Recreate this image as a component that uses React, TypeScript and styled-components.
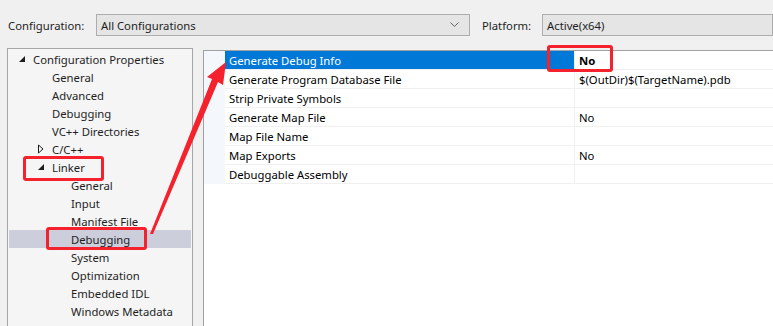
import styled, { createGlobalStyle } from "styled-components";

const Global = createGlobalStyle`
  body {
    margin: 0;
    background: #f0f0f0;
    font-family: "Segoe UI", "Noto Sans", "Liberation Sans", sans-serif;
    font-size: 11.3px;
    color: #1e1e1e;
  }
`;

const Page = styled.div`
  position: relative;
  width: 773px;
  height: 326px;
  overflow: hidden;
  background: #f0f0f0;
`;

const Toolbar = styled.div`
  display: flex;
  align-items: center;
  padding: 14px 0 0 8px;
  height: 22px;
`;

const Label = styled.span<{ w: number }>`
  width: ${({ w }) => w}px;
  flex-shrink: 0;
  color: #1e1e1e;
`;

const Combo = styled.div<{ w: number }>`
  display: flex;
  align-items: center;
  flex-shrink: 0;
  box-sizing: border-box;
  width: ${({ w }) => w}px;
  height: 22px;
  padding: 0 10px 0 4px;
  background: #e5e5e5;
  border: 1px solid #adadad;
  margin-right: 12px;
`;

const ComboText = styled.span`
  flex: 1;
`;

const Body = styled.div`
  display: flex;
  align-items: flex-start;
  gap: 10px;
  margin-top: 12px;
  padding-left: 7px;
`;

const Tree = styled.div`
  box-sizing: border-box;
  width: 186px;
  height: 300px;
  padding: 1px 0;
  background: #f5f5f5;
  border: 1px solid #a7a7a7;
`;

const TreeItem = styled.div<{ level: number; selected?: boolean }>`
  display: flex;
  align-items: center;
  height: 18px;
  margin: 0 1px;
  padding-left: ${({ level }) => 9 + level * 19}px;
  background: ${({ selected }) => (selected ? "#cccedb" : "transparent")};
  white-space: nowrap;
`;

const Toggle = styled.span`
  display: flex;
  align-items: center;
  width: 15px;
  height: 18px;
`;

const Grid = styled.div`
  flex: 1;
  height: 300px;
  margin-top: 2px;
  background: #fff;
  border-left: 1px solid #a0a0a0;
  border-top: 1px solid #a0a0a0;
`;

const PropRow = styled.div`
  display: grid;
  grid-template-columns: 21px 349px 1fr;
  height: 19px;
`;

const Gutter = styled.div`
  background: #f4f7fc;
`;

const NameCell = styled.div<{ selected?: boolean }>`
  display: flex;
  align-items: center;
  padding-left: 4px;
  border-bottom: 1px solid #f0f0f0;
  background: ${({ selected }) => (selected ? "#0078d7" : "#fff")};
  color: ${({ selected }) => (selected ? "#fff" : "#000")};
  white-space: nowrap;
`;

const ValueCell = styled.div<{ bold?: boolean }>`
  display: flex;
  align-items: center;
  padding-left: 4px;
  border-left: 1px solid #f0f0f0;
  border-bottom: 1px solid #f0f0f0;
  color: #000;
  font-weight: ${({ bold }) => (bold ? 700 : 400)};
  white-space: nowrap;
`;

const Mark = styled.div<{ x: number; y: number; w: number; h: number }>`
  position: absolute;
  left: ${({ x }) => x}px;
  top: ${({ y }) => y}px;
  width: ${({ w }) => w}px;
  height: ${({ h }) => h}px;
  box-sizing: border-box;
  border: 3px solid #f5222d;
  border-radius: 3px;
`;

const Overlay = styled.svg`
  position: absolute;
  left: 0;
  top: 0;
  pointer-events: none;
`;

type Node = { label: string; level: number; toggle?: "open" | "closed"; selected?: boolean };

const nodes: Node[] = [
  { label: "Configuration Properties", level: 0, toggle: "open" },
  { label: "General", level: 1 },
  { label: "Advanced", level: 1 },
  { label: "Debugging", level: 1 },
  { label: "VC++ Directories", level: 1 },
  { label: "C/C++", level: 1, toggle: "closed" },
  { label: "Linker", level: 1, toggle: "open" },
  { label: "General", level: 2 },
  { label: "Input", level: 2 },
  { label: "Manifest File", level: 2 },
  { label: "Debugging", level: 2, selected: true },
  { label: "System", level: 2 },
  { label: "Optimization", level: 2 },
  { label: "Embedded IDL", level: 2 },
  { label: "Windows Metadata", level: 2 },
  { label: "Advanced", level: 2 },
];

const props = [
  { name: "Generate Debug Info", value: "No", selected: true },
  { name: "Generate Program Database File", value: "$(OutDir)$(TargetName).pdb" },
  { name: "Strip Private Symbols", value: "" },
  { name: "Generate Map File", value: "No" },
  { name: "Map File Name", value: "" },
  { name: "Map Exports", value: "No" },
  { name: "Debuggable Assembly", value: "" },
];

function Triangle({ kind }: { kind: "open" | "closed" }) {
  return kind === "open" ? (
    <svg width="8" height="8" viewBox="0 0 8 8">
      <path d="M1 7 L7 7 L7 1 Z" fill="#1e1e1e" />
    </svg>
  ) : (
    <svg width="8" height="10" viewBox="0 0 8 10">
      <path d="M1.5 1 L6 5 L1.5 9 Z" fill="none" stroke="#1e1e1e" strokeWidth="1" />
    </svg>
  );
}

export default function App() {
  return (
    <Page>
      <Global />
      <Toolbar>
        <Label w={88}>Configuration:</Label>
        <Combo w={374}>
          <ComboText>All Configurations</ComboText>
          <svg width="9" height="6" viewBox="0 0 9 6">
            <path d="M0.5 0.5 L4.5 4.5 L8.5 0.5" fill="none" stroke="#606060" strokeWidth="1" />
          </svg>
        </Combo>
        <Label w={60}>Platform:</Label>
        <Combo w={231}>
          <ComboText>Active(x64)</ComboText>
        </Combo>
      </Toolbar>
      <Body>
        <Tree>
          {nodes.map((n, i) => (
            <TreeItem key={i} level={n.level} selected={n.selected}>
              <Toggle>{n.toggle && <Triangle kind={n.toggle} />}</Toggle>
              {n.label}
            </TreeItem>
          ))}
        </Tree>
        <Grid>
          {props.map((p) => (
            <PropRow key={p.name}>
              <Gutter />
              <NameCell selected={p.selected}>{p.name}</NameCell>
              <ValueCell bold={p.selected}>{p.value}</ValueCell>
            </PropRow>
          ))}
        </Grid>
      </Body>
      <Mark x={23} y={156} w={81} h={25} />
      <Mark x={46} y={227} w={101} h={23} />
      <Mark x={547} y={45} w={66} h={27} />
      <Overlay width="773" height="326" viewBox="0 0 773 326">
        <path d="M150 234 L153 234 L218 82 L223 85 L226 62 L207 77 L212 79 Z" fill="#f5222d" />
      </Overlay>
    </Page>
  );
}
